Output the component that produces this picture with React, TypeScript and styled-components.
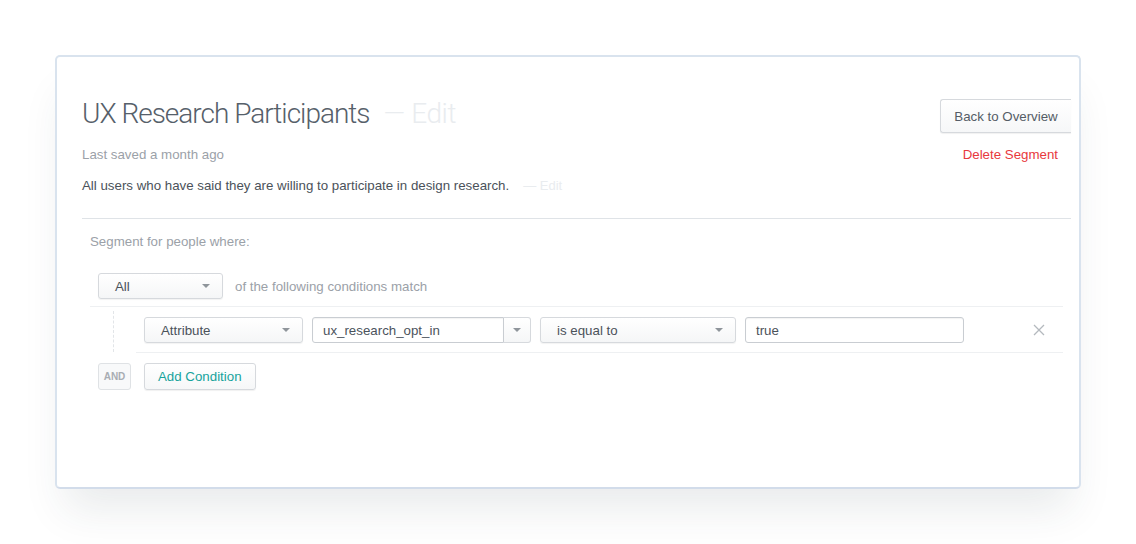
import React from 'react';
import styled, { createGlobalStyle } from 'styled-components';

const GlobalStyle = createGlobalStyle`
  html, body {
    margin: 0;
    padding: 0;
    background: #ffffff;
  }
  body {
    font-family: "Liberation Sans", Arial, sans-serif;
    font-size: 13.3px;
    color: #4b535c;
  }
`;

const Page = styled.div`
  padding: 55px 55px 0 55px;
  width: 1136px;
  height: 544px;
  box-sizing: border-box;
`;

const Card = styled.div`
  width: 1026px;
  height: 434px;
  box-sizing: border-box;
  background: #fff;
  border: 2px solid #d9e3ee;
  border-bottom-color: #d2dcea;
  border-radius: 5px;
  box-shadow: 0 30px 40px -10px rgba(40, 55, 70, 0.1);
  padding: 40px 8px 0 25px;
  overflow: hidden;
`;

const HeaderRow = styled.div`
  display: flex;
  justify-content: space-between;
  align-items: flex-start;
`;

const Title = styled.h1`
  margin: 0;
  font-family: Roboto, "Liberation Sans", sans-serif;
  font-weight: 300;
  font-size: 28px;
  line-height: 34px;
  color: #56606a;
  letter-spacing: -1px;
`;

const EditHint = styled.span<{ $size: number }>`
  color: #e9ecef;
  font-size: ${(p) => p.$size}px;
  letter-spacing: ${(p) => (p.$size > 20 ? '-0.4px' : '0')};
  margin-left: ${(p) => (p.$size > 20 ? 14 : 14)}px;
`;

const Button = styled.button<{ $accent?: boolean; $clipped?: boolean }>`
  font-family: "Liberation Sans", Arial, sans-serif;
  font-size: 13.3px;
  white-space: nowrap;
  height: ${(p) => (p.$clipped ? 34 : 27)}px;
  padding: 0 13px;
  color: ${(p) => (p.$accent ? '#17a39c' : '#555d66')};
  background: linear-gradient(#ffffff, #f6f7f8);
  border: 1px solid #d6d9dd;
  border-right-width: ${(p) => (p.$clipped ? 0 : 1)}px;
  border-radius: ${(p) => (p.$clipped ? '3px 0 0 3px' : '3px')};
  box-shadow: 0 1px 1px rgba(0, 0, 0, 0.06);
  cursor: pointer;
`;

const BackButton = styled(Button)`
  margin-top: 2px;
  width: 131px;
`;

const MetaRow = styled.div`
  display: flex;
  justify-content: space-between;
  margin-top: 12px;
  line-height: 20px;
`;

const Muted = styled.span`
  color: #9ba1a8;
`;

const DangerLink = styled.a`
  color: #e8383d;
  margin-right: 13px;
  cursor: pointer;
`;

const Description = styled.p`
  margin: 11px 0 0;
  line-height: 20px;
  color: #4b525a;
`;

const Divider = styled.hr`
  margin: 22px 0 0;
  border: 0;
  border-top: 1px solid #dfe3e7;
`;

const Body = styled.div`
  padding: 13px 8px 0 8px;
`;

const Lead = styled.div`
  line-height: 20px;
  color: #9ba1a8;
`;

const MatchRow = styled.div`
  display: flex;
  align-items: center;
  gap: 12px;
  margin-top: 21px;
  padding-left: 8px;
  padding-bottom: 7px;
  border-bottom: 1px solid #eef0f2;
`;

const SelectBox = styled.div<{ $w: number }>`
  position: relative;
  box-sizing: border-box;
  width: ${(p) => p.$w}px;
  height: 26px;
  display: flex;
  align-items: center;
  padding-left: 16px;
  background: linear-gradient(#ffffff, #f5f6f7);
  border: 1px solid #d6d9dd;
  border-radius: 3px;
  box-shadow: 0 1px 1px rgba(0, 0, 0, 0.05);
  color: #4b525a;
`;

const Caret = styled.span`
  position: absolute;
  right: 12px;
  top: 50%;
  margin-top: -2px;
  width: 0;
  height: 0;
  border-left: 4px solid transparent;
  border-right: 4px solid transparent;
  border-top: 4px solid #8f959b;
`;

const ConditionRow = styled.div`
  display: flex;
  align-items: stretch;
`;

const Rail = styled.div`
  width: 46px;
  display: flex;
  justify-content: center;
  padding: 4px 0 1px;
  &::before {
    content: '';
    border-left: 1px dashed #e2e5e8;
  }
`;

const Fields = styled.div`
  flex: 1;
  display: flex;
  align-items: center;
  gap: 9px;
  padding: 10px 0 9px 8px;
  border-bottom: 1px solid #eef0f2;
`;

const Combo = styled.div`
  display: flex;
  height: 26px;
`;

const ComboInput = styled.div`
  box-sizing: border-box;
  width: 192px;
  height: 26px;
  display: flex;
  align-items: center;
  padding-left: 10px;
  background: #fff;
  border: 1px solid #c9cdd2;
  border-radius: 3px 0 0 3px;
  box-shadow: inset 0 1px 1px rgba(0, 0, 0, 0.05);
`;

const ComboButton = styled.div`
  position: relative;
  box-sizing: border-box;
  width: 27px;
  height: 26px;
  background: linear-gradient(#ffffff, #f5f6f7);
  border: 1px solid #d6d9dd;
  border-left: 0;
  border-radius: 0 3px 3px 0;
  ${Caret} {
    right: 9px;
  }
`;

const TextInput = styled.div<{ $w: number }>`
  box-sizing: border-box;
  width: ${(p) => p.$w}px;
  height: 26px;
  display: flex;
  align-items: center;
  padding-left: 10px;
  background: #fff;
  border: 1px solid #c9cdd2;
  border-radius: 3px;
  box-shadow: inset 0 1px 1px rgba(0, 0, 0, 0.05);
  color: #4b525a;
`;

const RemoveIcon = styled.svg`
  margin-left: auto;
  margin-right: 18px;
`;

const AddRow = styled.div`
  display: flex;
  align-items: center;
  gap: 13px;
  margin-top: 10px;
  padding-left: 8px;
`;

const AndBadge = styled.div`
  box-sizing: border-box;
  width: 33px;
  height: 27px;
  display: flex;
  align-items: center;
  justify-content: center;
  font-size: 10px;
  font-weight: 700;
  color: #a8adb3;
  background: #f8f9fa;
  border: 1px solid #dfe2e5;
  border-radius: 3px;
`;

const App: React.FC = () => {
  return (
    <>
      <GlobalStyle />
      <Page>
        <Card>
          <HeaderRow>
            <Title>
              UX Research Participants
              <EditHint $size={28}>— Edit</EditHint>
            </Title>
            <BackButton $clipped>Back to Overview</BackButton>
          </HeaderRow>
          <MetaRow>
            <Muted>Last saved a month ago</Muted>
            <DangerLink>Delete Segment</DangerLink>
          </MetaRow>
          <Description>
            All users who have said they are willing to participate in design research.
            <EditHint $size={13}>— Edit</EditHint>
          </Description>
          <Divider />
          <Body>
            <Lead>Segment for people where:</Lead>
            <MatchRow>
              <SelectBox $w={125}>
                All
                <Caret />
              </SelectBox>
              <Muted>of the following conditions match</Muted>
            </MatchRow>
            <ConditionRow>
              <Rail />
              <Fields>
                <SelectBox $w={159}>
                  Attribute
                  <Caret />
                </SelectBox>
                <Combo>
                  <ComboInput>ux_research_opt_in</ComboInput>
                  <ComboButton>
                    <Caret />
                  </ComboButton>
                </Combo>
                <SelectBox $w={196}>
                  is equal to
                  <Caret />
                </SelectBox>
                <TextInput $w={219}>true</TextInput>
                <RemoveIcon width="12" height="12" viewBox="0 0 12 12">
                  <path d="M1 1 L11 11 M11 1 L1 11" stroke="#b4b9be" strokeWidth="1.3" />
                </RemoveIcon>
              </Fields>
            </ConditionRow>
            <AddRow>
              <AndBadge>AND</AndBadge>
              <Button $accent>Add Condition</Button>
            </AddRow>
          </Body>
        </Card>
      </Page>
    </>
  );
};

export default App;
